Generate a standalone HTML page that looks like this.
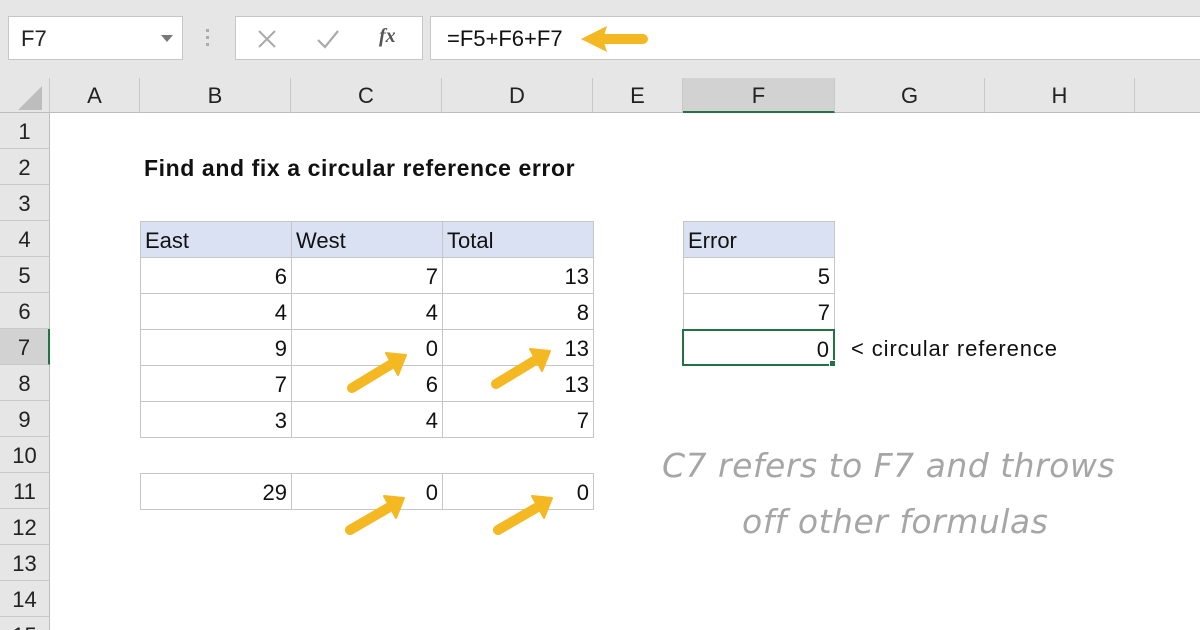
<!DOCTYPE html>
<html><head><meta charset="utf-8"><style>
*{margin:0;padding:0;box-sizing:border-box}
html,body{width:1200px;height:630px;overflow:hidden}
body{background:#fff;font-family:"Liberation Sans",Arial,sans-serif;position:relative}
.abs{position:absolute}
.tb{left:0;top:0;width:1200px;height:78px;background:#e6e6e6}
.box{background:#fff;border:1px solid #c6c6c6;position:absolute}
.ch{top:78px;height:35px;background:#e6e6e6;border-right:1px solid #c8c8c8;border-bottom:1px solid #bdbdbd;font-size:22px;color:#222;text-align:center;line-height:36px}
.rh{left:0;width:50px;height:36px;background:#e6e6e6;border-bottom:1px solid #c8c8c8;border-right:1px solid #bdbdbd;font-size:22px;color:#222;text-align:center;line-height:37px}
.c{position:absolute;height:37px;border:1px solid #c6c6c6;font-size:22px;color:#111;line-height:38px;padding:0 4px}
.r{text-align:right}
.hd{background:#d9e1f2}
</style></head><body>
<div class="abs tb"></div>
<div class="box" style="left:8px;top:16px;width:175px;height:44px"><span class="abs" style="left:12px;top:9px;font-size:22px;color:#222">F7</span><svg class="abs" style="left:152px;top:18px" width="12" height="8"><path d="M0 0L12 0L6 7Z" fill="#777"/></svg></div>
<div class="abs" style="left:206px;top:29px;width:3px;height:3px;background:#aaa;box-shadow:0 7px 0 #aaa,0 14px 0 #aaa"></div>
<div class="box" style="left:235px;top:16px;width:188px;height:44px">
<svg class="abs" style="left:20px;top:11px" width="22" height="22"><path d="M3 3L19 19M19 3L3 19" stroke="#aaa" stroke-width="2"/></svg>
<svg class="abs" style="left:80px;top:11px" width="24" height="22"><path d="M2 12L9 19L22 3" stroke="#aaa" stroke-width="2.2" fill="none"/></svg>
<span class="abs" style="left:143px;top:8px;font-family:'Liberation Serif',serif;font-style:italic;font-weight:bold;font-size:20px;color:#555">fx</span></div>
<div class="box" style="left:430px;top:16px;width:780px;height:44px"><span class="abs" style="left:16px;top:9px;font-size:22px;color:#111">=F5+F6+F7</span>
<svg class="abs" style="left:150px;top:7px" width="70" height="30"><path d="M22 15L62 15" stroke="#f4b922" stroke-width="10" stroke-linecap="round"/><path d="M0 15L26 2L22 15L26 28Z" fill="#f4b922"/></svg></div>

<div class="abs" style="left:0;top:78px;width:50px;height:35px;background:#e6e6e6;border-right:1px solid #c8c8c8;border-bottom:1px solid #bdbdbd"><svg class="abs" style="left:18px;top:8px" width="24" height="24"><path d="M24 0L24 24L0 24Z" fill="#bdbdbd"/></svg></div>
<div class="abs ch" style="left:50px;width:90px">A</div>
<div class="abs ch" style="left:140px;width:151px">B</div>
<div class="abs ch" style="left:291px;width:151px">C</div>
<div class="abs ch" style="left:442px;width:151px">D</div>
<div class="abs ch" style="left:593px;width:90px">E</div>
<div class="abs ch" style="left:683px;width:152px;background:#d2d2d2;border-bottom:2px solid #217346;">F</div>
<div class="abs ch" style="left:835px;width:150px">G</div>
<div class="abs ch" style="left:985px;width:150px">H</div>
<div class="abs ch" style="left:1135px;width:70px"></div>

<div class="abs rh" style="top:113px">1</div>
<div class="abs rh" style="top:149px">2</div>
<div class="abs rh" style="top:185px">3</div>
<div class="abs rh" style="top:221px">4</div>
<div class="abs rh" style="top:257px">5</div>
<div class="abs rh" style="top:293px">6</div>
<div class="abs rh" style="top:329px;background:#d2d2d2;border-right:2px solid #217346">7</div>
<div class="abs rh" style="top:365px">8</div>
<div class="abs rh" style="top:401px">9</div>
<div class="abs rh" style="top:437px">10</div>
<div class="abs rh" style="top:473px">11</div>
<div class="abs rh" style="top:509px">12</div>
<div class="abs rh" style="top:545px">13</div>
<div class="abs rh" style="top:581px">14</div>
<div class="abs rh" style="top:617px">15</div>

<div class="abs" style="left:144px;top:155px;font-size:23px;font-weight:bold;color:#111;letter-spacing:0.6px">Find and fix a circular reference error</div>

<div class="c hd" style="left:140px;top:221px;width:152px">East</div>
<div class="c hd" style="left:291px;top:221px;width:152px">West</div>
<div class="c hd" style="left:442px;top:221px;width:152px">Total</div>
<div class="c r" style="left:140px;top:257px;width:152px">6</div><div class="c r" style="left:291px;top:257px;width:152px">7</div><div class="c r" style="left:442px;top:257px;width:152px">13</div>
<div class="c r" style="left:140px;top:293px;width:152px">4</div><div class="c r" style="left:291px;top:293px;width:152px">4</div><div class="c r" style="left:442px;top:293px;width:152px">8</div>
<div class="c r" style="left:140px;top:329px;width:152px">9</div><div class="c r" style="left:291px;top:329px;width:152px">0</div><div class="c r" style="left:442px;top:329px;width:152px">13</div>
<div class="c r" style="left:140px;top:365px;width:152px">7</div><div class="c r" style="left:291px;top:365px;width:152px">6</div><div class="c r" style="left:442px;top:365px;width:152px">13</div>
<div class="c r" style="left:140px;top:401px;width:152px">3</div><div class="c r" style="left:291px;top:401px;width:152px">4</div><div class="c r" style="left:442px;top:401px;width:152px">7</div>
<div class="c r" style="left:140px;top:473px;width:152px">29</div><div class="c r" style="left:291px;top:473px;width:152px">0</div><div class="c r" style="left:442px;top:473px;width:152px">0</div>

<div class="c hd" style="left:683px;top:221px;width:152px">Error</div>
<div class="c r" style="left:683px;top:257px;width:152px">5</div>
<div class="c r" style="left:683px;top:293px;width:152px">7</div>
<div class="c r" style="left:682px;top:329px;width:153px;border:2px solid #217346">0</div>
<div class="abs" style="left:829px;top:360px;width:7px;height:7px;background:#217346;border:1px solid #fff"></div>
<div class="abs" style="left:851px;top:336px;font-size:22px;color:#111;letter-spacing:0.9px">&lt; circular reference</div>

<svg class="abs" style="left:0;top:0" width="1200" height="630">
<g fill="#f4b922" stroke="#f4b922" stroke-linecap="round">
<path d="M352 388L390 365" stroke-width="10"/><path d="M406 355L386 353L398 375Z" stroke-width="2" stroke-linejoin="round"/>
<path d="M496 384L534 361" stroke-width="10"/><path d="M550 351L530 349L542 371Z" stroke-width="2" stroke-linejoin="round"/>
<path d="M350 530L388 508" stroke-width="10"/><path d="M404 498L384 496L396 518Z" stroke-width="2" stroke-linejoin="round"/>
<path d="M498 530L536 508" stroke-width="10"/><path d="M552 498L532 496L544 518Z" stroke-width="2" stroke-linejoin="round"/>
</g></svg>

<div class="abs" style="left:662px;top:446px;font-size:33px;color:#a6a6a6;font-family:'DejaVu Sans',sans-serif;font-style:italic;font-weight:200;letter-spacing:0.5px">C7 refers to F7 and throws</div>
<div class="abs" style="left:742px;top:502px;font-size:33px;color:#a6a6a6;font-family:'DejaVu Sans',sans-serif;font-style:italic;font-weight:200;letter-spacing:0.5px">off other formulas</div>
</body></html>
